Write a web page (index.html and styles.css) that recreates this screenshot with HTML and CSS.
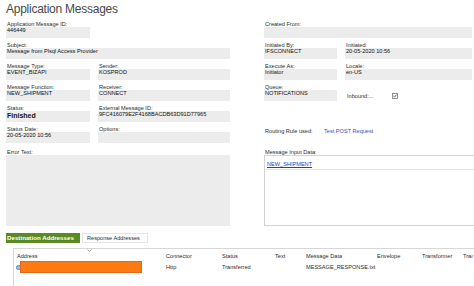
FILE: index.html
```html
<!DOCTYPE html>
<html>
<head>
<meta charset="utf-8">
<link rel="stylesheet" href="styles.css">
</head>
<body>
<div class="page">
  <h1 class="title">Application Messages</h1>
  <div class="top">
    <div class="grid left">
      <div class="field"><div class="lbl">Application Message ID:</div><div class="val">446449</div></div>
      <div></div>
      <div class="field span2"><div class="lbl">Subject:</div><div class="val">Message from Plsql Access Provider</div></div>
      <div class="field"><div class="lbl">Message Type:</div><div class="val">EVENT_BIZAPI</div></div>
      <div class="field"><div class="lbl">Sender:</div><div class="val">KOSPROD</div></div>
      <div class="field"><div class="lbl">Message Function:</div><div class="val">NEW_SHIPMENT</div></div>
      <div class="field"><div class="lbl">Receiver:</div><div class="val">CONNECT</div></div>
      <div class="field"><div class="lbl">Status:</div><div class="val strong">Finished</div></div>
      <div class="field"><div class="lbl">External Message ID:</div><div class="val">9FC416079E2F4168BACDB63D91D77965</div></div>
      <div class="field"><div class="lbl">Status Date:</div><div class="val">20-05-2020 10:56</div></div>
      <div class="field"><div class="lbl">Options:</div><div class="val"></div></div>
      <div class="field span2 tall"><div class="lbl">Error Text:</div><div class="val grow"></div></div>
    </div>
    <div class="grid right">
      <div class="field span2"><div class="lbl">Created From:</div><div class="val"></div></div>
      <div class="field"><div class="lbl">Initiated By:</div><div class="val">IFSCONNECT</div></div>
      <div class="field"><div class="lbl">Initiated:</div><div class="val">20-05-2020 10:56</div></div>
      <div class="field"><div class="lbl">Execute As:</div><div class="val">Initiator</div></div>
      <div class="field"><div class="lbl">Locale:</div><div class="val">en-US</div></div>
      <div class="field"><div class="lbl">Queue:</div><div class="val">NOTIFICATIONS</div></div>
      <div class="inbound"><span class="inb-label">Inbound:...</span>
        <svg class="check" width="6" height="6" viewBox="0 0 6 6"><rect x="0.5" y="0.5" width="5" height="5" fill="#fff" stroke="#7a7a7a" stroke-width="0.8"/><polyline points="1.4,3 2.5,4.1 4.6,1.6" fill="none" stroke="#333" stroke-width="0.8"/></svg>
      </div>
      <div class="span2"></div>
      <div class="routing span2"><span class="rr-label">Routing Rule used:</span><span class="link">Test POST Request</span></div>
      <div class="field span2 tall"><div class="lbl">Message Input Data:</div>
        <div class="inputbox"><div class="inputrow"><span class="ulink">NEW_SHIPMENT</span></div></div>
      </div>
    </div>
  </div>
  <div class="tabs">
    <div class="tab active">Destination Addresses</div>
    <div class="tab">Response Addresses</div>
  </div>
  <div class="table">
    <svg class="sort" width="5" height="3" viewBox="0 0 5 3"><polyline points="0.5,0.5 2.5,2.5 4.5,0.5" fill="none" stroke="#9a9a9a" stroke-width="0.8"/></svg>
    <div class="trow head">
      <div>Address</div><div>Connector</div><div>Status</div><div>Text</div><div>Message Data</div><div>Envelope</div><div>Transformer</div><div class="last">Transport</div>
    </div>
    <div class="trow body">
      <div class="addr">
        <svg class="globe" width="5" height="5" viewBox="0 0 10 10"><circle cx="5" cy="5" r="4.5" fill="#5d9be0" stroke="#2f6cb8" stroke-width="1"/><path d="M1 5h8M5 1c-2 2-2 6 0 8M5 1c2 2 2 6 0 8" fill="none" stroke="#dfeeff" stroke-width="0.8"/></svg>
        <span class="redact"></span>
      </div>
      <div>Http</div><div>Transferred</div><div></div><div>MESSAGE_RESPONSE.txt</div><div></div><div></div><div></div>
    </div>
  </div>
</div>
</body>
</html>
```
FILE: styles.css
```css
* { box-sizing: border-box; }
html, body { margin: 0; padding: 0; }
body {
  width: 474px;
  height: 286px;
  overflow: hidden;
  background: #fff;
  font-family: "Liberation Sans", Arial, sans-serif;
  font-size: 5.6px;
  color: #2a2a2a;
}
.page { padding-left: 6px; }
.title {
  margin: 0;
  height: 21px;
  padding-top: 2px;
  font-size: 12px;
  line-height: 14px;
  font-weight: normal;
  color: #484848;
  letter-spacing: -0.25px;
}
.top { display: flex; gap: 34px; }
.grid {
  display: grid;
  grid-template-rows: repeat(6, 17px) 79px;
  row-gap: 4px;
  column-gap: 8px;
}
.left { grid-template-columns: 84px 132px; }
.right { grid-template-columns: 73px 127px; }
.span2 { grid-column: span 2; }
.field { display: flex; flex-direction: column; }
.lbl {
  height: 6px;
  line-height: 6px;
  padding-left: 1px;
  white-space: nowrap;
  color: #2a2a2a;
}
.val {
  height: 11px;
  background: #ececec;
  line-height: 7px;
  padding: 0 1px;
  color: #111;
  white-space: nowrap;
  overflow: hidden;
}
.val.strong {
  font-weight: bold;
  font-size: 7px;
  line-height: 10px;
  color: #111;
}
.tall { padding-top: 2px; }
.val.grow { flex: 1; height: auto; }
.inbound {
  display: flex;
  align-items: center;
  padding-top: 6px;
  padding-left: 2px;
}
.inb-label { width: 45px; }
.check { display: block; }
.routing {
  display: flex;
  padding-top: 2px;
  padding-left: 1px;
  line-height: 6px;
}
.rr-label { width: 59px; }
.link { color: #3a4fc4; }
.inputbox {
  flex: 1;
  border: 1px solid #d2d2d2;
  border-right: none;
  margin-right: -4px;
}
.inputrow {
  height: 14px;
  border-bottom: 1px solid #e4e4e4;
  padding: 5px 0 0 2px;
  line-height: 6px;
}
.ulink { color: #2a3bbd; text-decoration: underline; }
.tabs {
  display: flex;
  margin-top: 7px;
  height: 10px;
}
.tab {
  margin-left: 2px;
  width: 66px;
  padding-left: 4px;
  border: 1px solid #e6e6e6;
  line-height: 8px;
  white-space: nowrap;
}
.tab.active {
  margin-left: 0;
  width: 74px;
  padding-left: 1px;
  border: none;
  background: #5a8b22;
  color: #fff;
  font-weight: bold;
  font-size: 6.2px;
  line-height: 10px;
}
.table {
  position: relative;
  margin-top: 5px;
  margin-left: 7px;
  height: 40px;
  border-top: 1px solid #d6d6d6;
  border-left: 1px solid #d6d6d6;
  padding-left: 3px;
}
.sort { position: absolute; left: 73px; top: 0; }
.trow {
  display: grid;
  grid-template-columns: 149px 56px 53px 31px 71px 45px 41px 10px;
  white-space: nowrap;
}
.trow .last { overflow: hidden; }
.head { padding-top: 4px; line-height: 6px; }
.body { margin-top: 1px; height: 12px; align-items: center; line-height: 6px; }
.body > div { padding-top: 1px; }
.addr { display: flex; align-items: center; margin-left: -1.5px; }
.globe { display: block; flex: none; }
.redact {
  display: block;
  width: 122px;
  height: 12px;
  margin-left: -0.5px;
  background: #fb7a12;
  border: 1px solid #e8661a;
}
```
